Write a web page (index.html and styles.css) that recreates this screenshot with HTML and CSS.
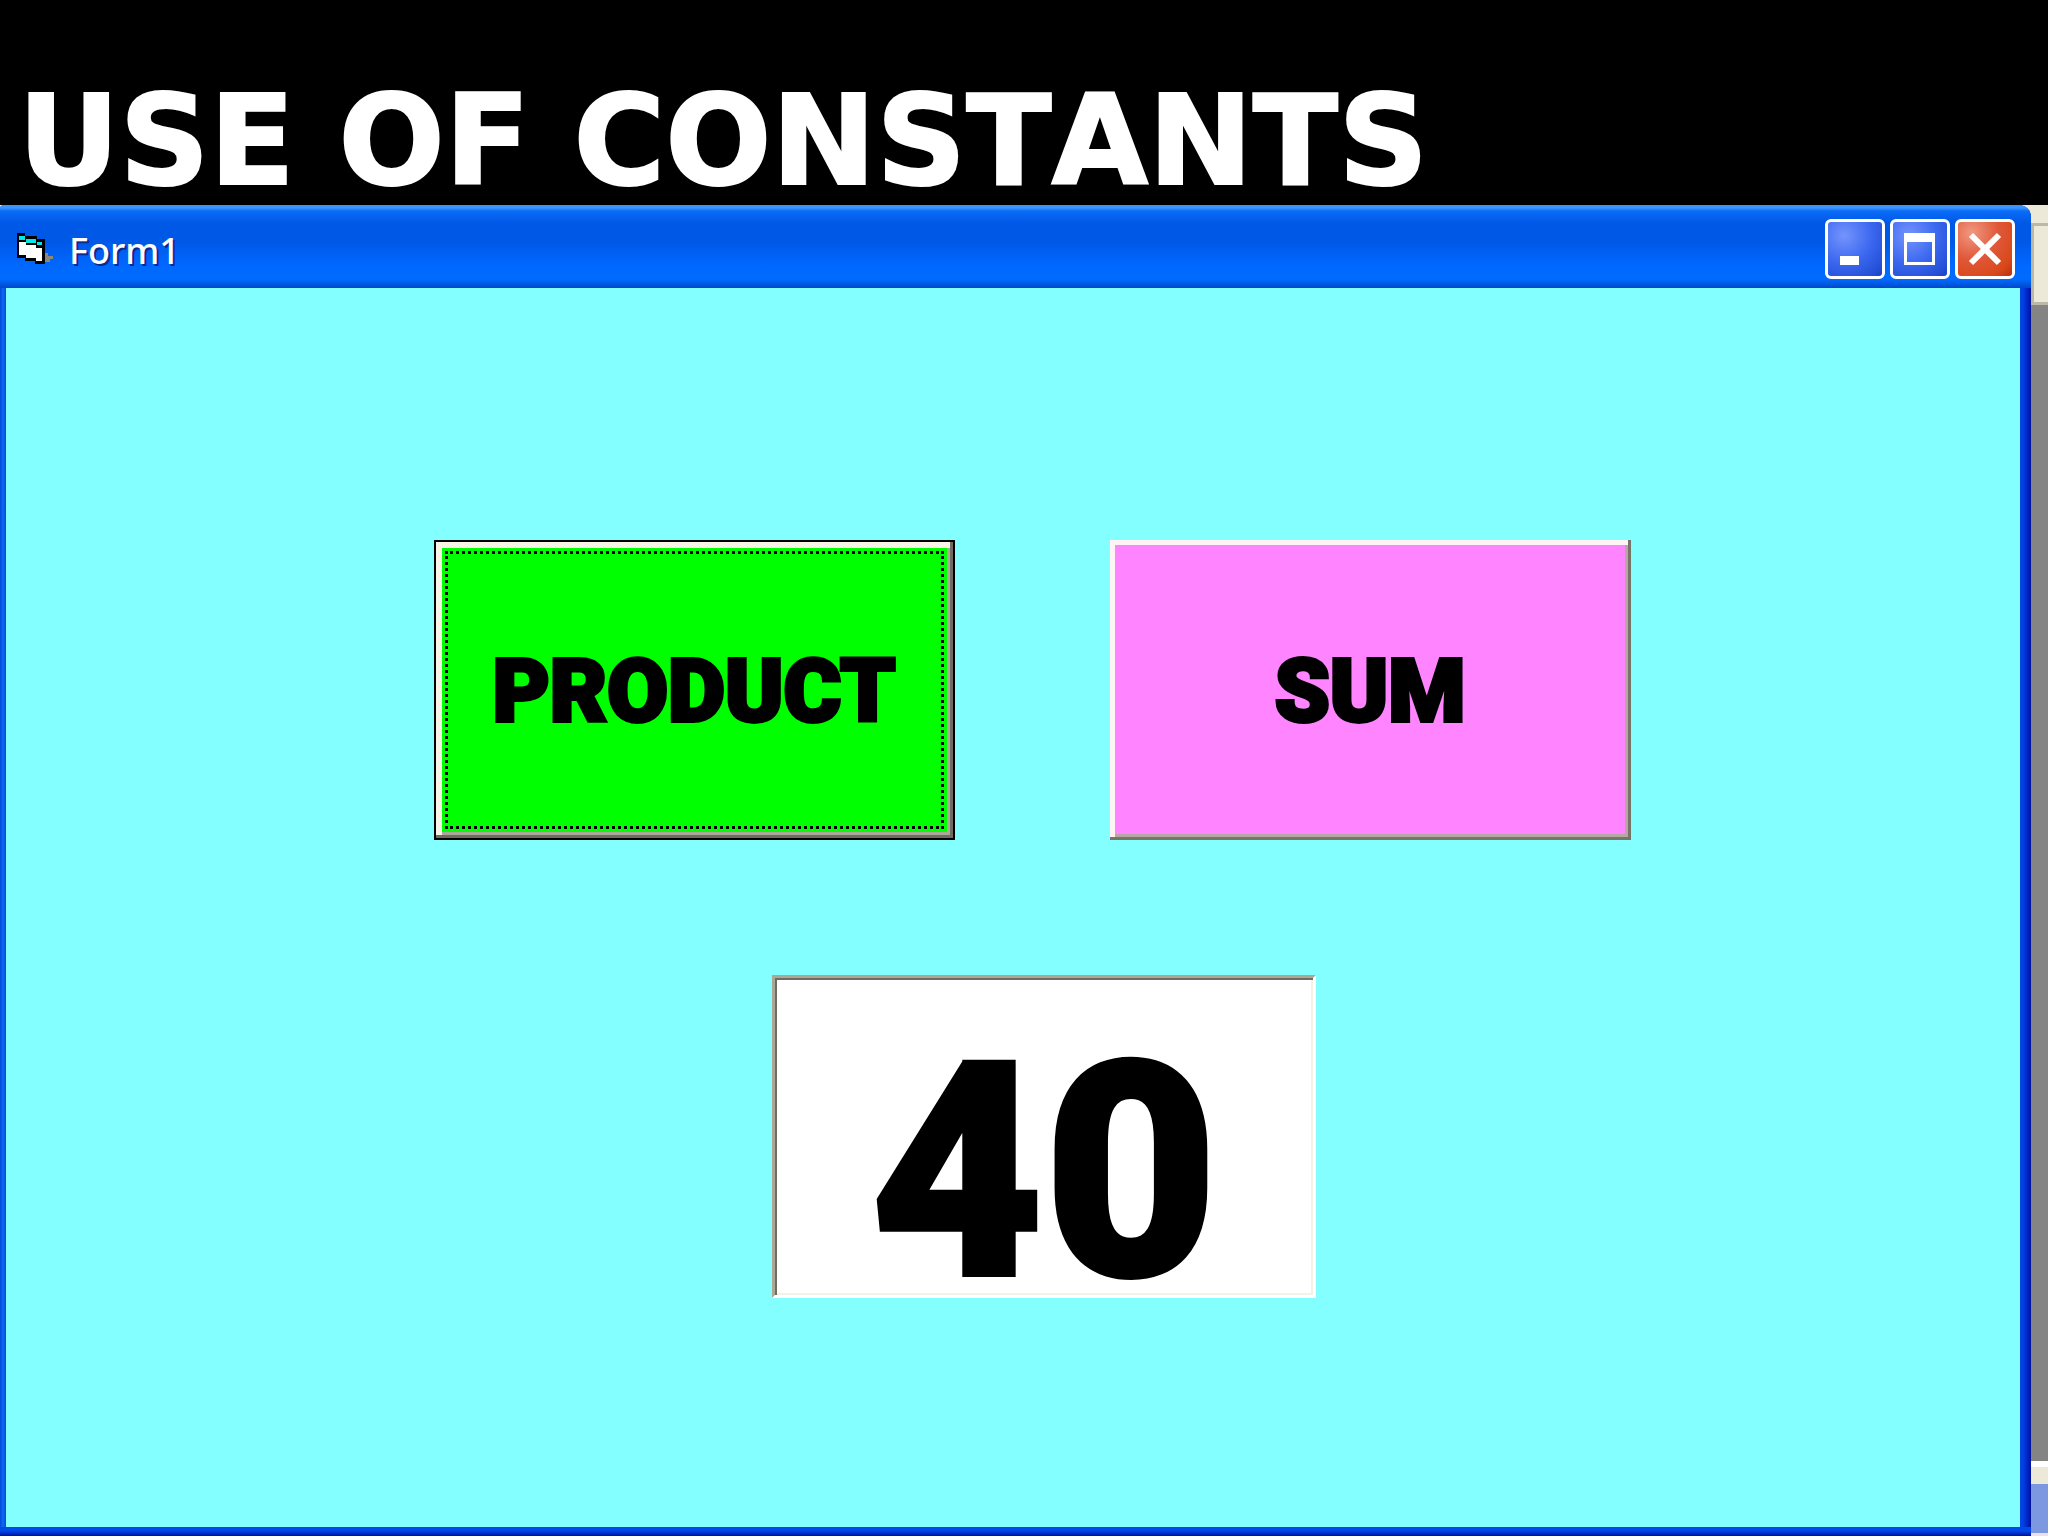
FILE: index.html
```html
<!DOCTYPE html>
<html lang="en">

<head>
  <meta charset="UTF-8">
  <meta name="viewport" content="width=device-width, initial-scale=1.0">
  <title>Use of Constants</title>
  <link rel="stylesheet" href="styles.css">
</head>

<body>
  <header class="slide-title">
    <h1>USE OF CONSTANTS</h1>
  </header>

  <div class="desktop">
    <!-- Form window -->
    <main class="window">
      <div class="title-bar">
        <svg class="form-icon" viewBox="0 0 36 32" aria-hidden="true">
          <path d="M27 20h4v3h5v3h-3v3h-6z" fill="#8c8778" />
          <path d="M0 0h8v3h12v3h8v25h-10v-3H8v-3H0z" fill="#000" />
          <path d="M2 9h7v3h10v3h6v13h-6v-3H9v-3H2z" fill="#fff" />
          <path d="M2 3h6v4H2zM9 6h10v4H9zM20 9h5v3h-5z" fill="#00e8e8" />
        </svg>
        <h2>Form1</h2>
        <div class="window-buttons">
          <button class="win-btn" type="button" aria-label="Minimize">
            <svg viewBox="0 0 54 54"><path d="M12 34h19v9H12z" fill="#fff" /></svg>
          </button>
          <button class="win-btn" type="button" aria-label="Maximize">
            <svg viewBox="0 0 54 54"><path d="M11 11h31v32H11zM14 20v20h25V20z" fill="#fff" fill-rule="evenodd" /></svg>
          </button>
          <button class="win-btn win-close" type="button" aria-label="Close">
            <svg viewBox="0 0 54 54"><path d="M13 13l28 28M41 13L13 41" stroke="#fff" stroke-width="6" /></svg>
          </button>
        </div>
      </div>

      <form class="form-body">
        <div class="controls">
          <button class="cmd cmd-product" type="button"><span>PRODUCT</span></button>
          <button class="cmd cmd-sum" type="button">SUM</button>
          <input class="result" type="text" value="40" aria-label="Result">
        </div>
      </form>
    </main>

    <!-- Strip of the IDE behind the form -->
    <div class="ide">
      <div class="ide-menu"></div>
      <div class="ide-toolbar"></div>
      <div class="ide-area"></div>
      <div class="ide-status"></div>
      <div class="ide-taskbar"></div>
    </div>
  </div>
</body>

</html>
```
FILE: styles.css
```css
* {
  margin: 0;
  padding: 0;
  box-sizing: border-box;
}

body {
  min-height: 100vh;
  display: flex;
  flex-direction: column;
  background: #000;
  font-family: "Liberation Sans", Arial, sans-serif;
}

/* Slide heading */
.slide-title {
  height: 205px;
  padding: 67px 18px 0;
}

.slide-title h1 {
  color: #fff;
  font-family: "DejaVu Sans", Verdana, sans-serif;
  font-size: 125px;
  font-weight: 700;
  font-kerning: none;
  line-height: 148px;
  white-space: nowrap;
  -webkit-text-stroke: 2px #fff;
}

.desktop {
  flex: 1;
  display: flex;
  background: #ece9d8;
}

/* XP window */
.window {
  flex: 1;
  display: flex;
  flex-direction: column;
  background: linear-gradient(to right, #0148d8, #1268f0 3px, #0148d8 6px, #0148d8 calc(100% - 11px), #0040e8 calc(100% - 8px), #0010a0);
  border-radius: 4px 12px 0 0;
  overflow: hidden;
}

.title-bar {
  height: 83px;
  padding: 0 16px 0 17px;
  display: flex;
  align-items: center;
  background: linear-gradient(to bottom, #3c94ff 0, #3c94ff 3px, #0a6cf8 6px, #0058e6 18px, #0058e6 36px, #0068ff 60px, #006cff 74px, #0048cc 83px);
}

.form-icon {
  width: 36px;
  height: 32px;
  margin-right: 16px;
  margin-top: 4px;
}

.title-bar h2 {
  flex: 1;
  padding-top: 8px;
  color: #fff;
  font-family: "Noto Sans", sans-serif;
  font-size: 36px;
  font-weight: 500;
  line-height: 48px;
  text-shadow: 2px 2px 0 #0a2a90;
}

.window-buttons {
  display: flex;
  gap: 5px;
  padding-top: 5px;
}

.win-btn {
  width: 60px;
  height: 60px;
  border: 3px solid #fff;
  border-radius: 6px;
  background: radial-gradient(circle at 30% 25%, #7494fc, #3c68f0 50%, #2450d8 85%, #1c40c0);
}

.win-close {
  background: radial-gradient(circle at 25% 20%, #f09880, #e0583a 45%, #d84818 80%, #b83010);
}

.win-btn svg {
  display: block;
  width: 54px;
  height: 54px;
}

.form-body {
  flex: 1;
  margin: 0 11px 9px 6px;
  padding-top: 252px;
  background: #84ffff;
}

/* Bottom edge of the frame */
.window::after {
  content: "";
  height: 9px;
  margin-top: -9px;
  background: linear-gradient(to bottom, #0048e8 4px, #0010a0);
}

.controls {
  display: grid;
  grid-template-columns: 521px 521px;
  column-gap: 155px;
  row-gap: 135px;
  justify-content: center;
  padding-left: 38px;
}

.cmd {
  height: 300px;
  border: 0;
  color: #000;
  font-family: Roboto, sans-serif;
  font-size: 88px;
  font-weight: 900;
  -webkit-text-stroke: 4px #000;
}

.cmd-product {
  padding: 9px;
  background: #00ff00;
  border: 2px solid #000;
  box-shadow: inset -3px -3px 0 #706c60, inset 6px 6px 0 #f8f4e8, inset -6px -6px 0 #aca899;
}

.cmd-product span {
  display: flex;
  align-items: center;
  justify-content: center;
  height: 100%;
  border: 3px dotted #000;
}

.cmd-sum {
  background: #ff84ff;
  box-shadow: inset -3px -3px 0 #78746a, inset 5px 5px 0 #fff4f4, inset -6px -6px 0 #b4a8a0;
}

.result {
  grid-column: 1 / -1;
  justify-self: center;
  width: 544px;
  height: 323px;
  margin-left: 24px;
  padding-top: 72px;
  background: #fff;
  border: 3px solid;
  border-color: #aca899 #fff #fff #aca899;
  box-shadow: inset 2px 2px 0 #706c60, inset -2px -2px 0 #f4f2e6;
  font-family: Roboto, sans-serif;
  font-size: 300px;
  font-weight: 900;
  text-align: center;
  -webkit-text-stroke: 4px #000;
}

/* IDE strip */
.ide {
  width: 17px;
  display: flex;
  flex-direction: column;
}

.ide-menu {
  height: 18px;
}

.ide-toolbar {
  height: 82px;
  border: 3px solid #bcb8a8;
  border-right: 0;
}

.ide-area {
  flex: 1;
  background: #848484;
}

.ide-status {
  height: 23px;
  border-top: 6px solid #fff;
}

.ide-taskbar {
  height: 52px;
  background: #7c98e0;
  border-bottom: 3px solid #ece0e8;
}
```
